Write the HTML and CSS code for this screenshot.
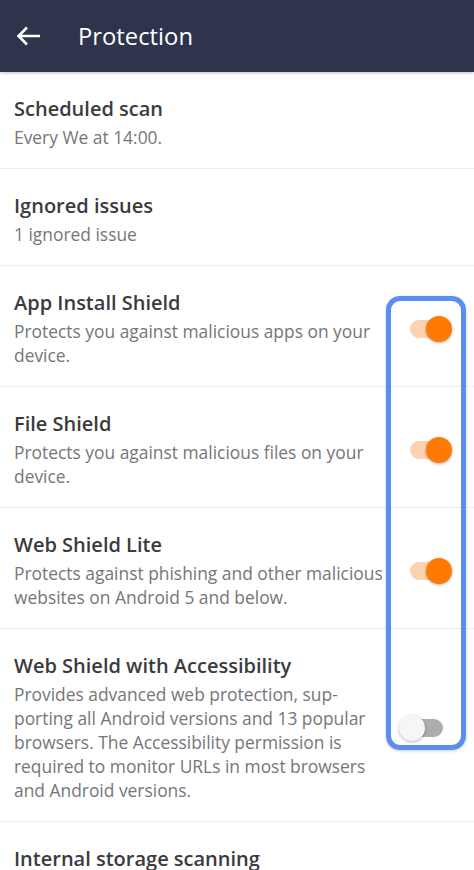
FILE: index.html
```html
<!DOCTYPE html>
<html lang="en">
<head>
<meta charset="utf-8">
<title>Protection</title>
<link rel="stylesheet" href="styles.css">
</head>
<body>
<div class="screen">
  <header class="appbar">
    <svg class="back" width="26" height="24" viewBox="0 0 26 24" aria-hidden="true">
      <path d="M3.5 12H25M12 3.5L3.5 12L12 20.5" fill="none" stroke="#fff" stroke-width="2.6" stroke-linecap="butt" stroke-linejoin="miter"/>
    </svg>
    <h1 class="appbar-title">Protection</h1>
  </header>

  <main class="list">
    <div class="row">
      <div class="text">
        <div class="title">Scheduled scan</div>
        <div class="sub">Every We at 14:00.</div>
      </div>
    </div>
    <div class="row">
      <div class="text">
        <div class="title">Ignored issues</div>
        <div class="sub">1 ignored issue</div>
      </div>
    </div>
    <div class="row">
      <div class="text">
        <div class="title">App Install Shield</div>
        <div class="sub">Protects you against malicious apps on your device.</div>
      </div>
      <div class="toggle on"><span class="track"></span><span class="thumb"></span></div>
    </div>
    <div class="row">
      <div class="text">
        <div class="title">File Shield</div>
        <div class="sub">Protects you against malicious files on your device.</div>
      </div>
      <div class="toggle on"><span class="track"></span><span class="thumb"></span></div>
    </div>
    <div class="row">
      <div class="text">
        <div class="title">Web Shield Lite</div>
        <div class="sub">Protects against phishing and other malicious websites on Android 5 and below.</div>
      </div>
      <div class="toggle on"><span class="track"></span><span class="thumb"></span></div>
    </div>
    <div class="row">
      <div class="text">
        <div class="title">Web Shield with Accessibility</div>
        <div class="sub">Provides advanced web protection, sup&shy;porting all Android versions and 13 popular browsers. The Accessibility permission is required to monitor URLs in most browsers and Android versions.</div>
      </div>
      <div class="toggle off"><span class="track"></span><span class="thumb"></span></div>
    </div>
    <div class="row">
      <div class="text">
        <div class="title">Internal storage scanning</div>
      </div>
    </div>
  </main>

  <div class="highlight" aria-hidden="true"></div>
</div>
</body>
</html>
```

FILE: styles.css
```css
* { box-sizing: border-box; }

html, body {
  margin: 0;
  padding: 0;
  background: #ffffff;
}

body {
  font-family: "Open Sans", "Noto Sans", sans-serif;
  overflow: hidden;
}

.screen {
  position: relative;
  width: 474px;
  height: 870px;
  overflow: hidden;
  background: #ffffff;
}

.appbar {
  height: 72px;
  background: #2d344b;
  display: flex;
  align-items: center;
  box-shadow: 0 1px 3px rgba(0, 0, 0, 0.25);
  position: relative;
  z-index: 2;
}

.back {
  display: block;
  margin-left: 15px;
  flex: 0 0 auto;
}

.appbar-title {
  margin: 0 0 0 37px;
  font-size: 23.8px;
  font-weight: 400;
  color: #ffffff;
  line-height: 30px;
}

.list {
  display: flex;
  flex-direction: column;
}

.row {
  display: grid;
  grid-template-columns: 372px 1fr;
  align-items: center;
  padding: 24px 0 19px 14px;
  border-bottom: 1px solid #ededed;
}

.text {
  display: flex;
  flex-direction: column;
  gap: 3px;
  min-width: 0;
}

.title {
  font-size: 20px;
  font-weight: 600;
  color: #3b3b3e;
  line-height: 26px;
  white-space: nowrap;
}

.sub {
  font-size: 17.4px;
  font-weight: 400;
  color: #76767a;
  line-height: 24px;
  hyphens: manual;
}

.toggle {
  justify-self: end;
  margin-right: 22px;
  display: flex;
  align-items: center;
  height: 26px;
}

.track {
  display: block;
  width: 36px;
  height: 18px;
  border-radius: 9px;
}

.thumb {
  display: block;
  width: 26px;
  height: 26px;
  border-radius: 50%;
  box-shadow: 0 1px 3px rgba(0, 0, 0, 0.3);
  position: relative;
  z-index: 1;
}

.toggle.on .track { background: #fdd2b0; }
.toggle.on .thumb {
  background: #ff7a00;
  margin-left: -20px;
}

.toggle.off { margin-right: 31px; }
.toggle.off .thumb {
  order: 0;
  background: #f6f6f6;
}
.toggle.off .track {
  order: 1;
  background: #adadad;
  margin-left: -20px;
  width: 38px;
}

.highlight {
  position: absolute;
  left: 386px;
  top: 296px;
  width: 80px;
  height: 454px;
  border: 5px solid #5b8ef0;
  border-radius: 14px;
  box-shadow: 0 1px 3px rgba(0, 0, 0, 0.2);
  pointer-events: none;
}
```
